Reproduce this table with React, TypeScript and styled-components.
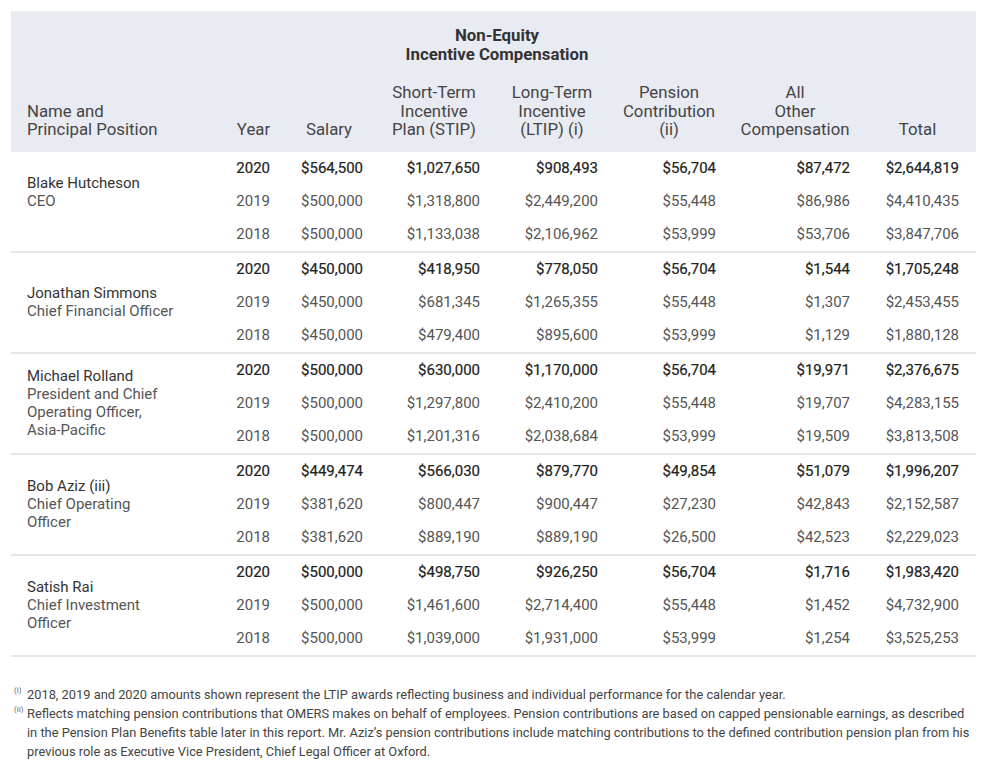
import React from 'react';
import styled, { createGlobalStyle } from 'styled-components';

const GlobalStyle = createGlobalStyle`
    body {
        margin: 0;
        background: #fff;
        font-family: Roboto, "Liberation Sans", sans-serif;
        color: #444;
    }
`;

const COLUMNS = '214px 57px 94px 116px 120px 114px 138px 112px';
const VALUE_PAD = [12, 13, 12, 14, 10, 14, 17];

type Exec = {
    lines: string[];
    rows: { year: string; values: string[] }[];
};

const EXECS: Exec[] = [
    {
        lines: ['Blake Hutcheson', 'CEO', '\u00a0'],
        rows: [
            { year: '2020', values: ['$564,500', '$1,027,650', '$908,493', '$56,704', '$87,472', '$2,644,819'] },
            { year: '2019', values: ['$500,000', '$1,318,800', '$2,449,200', '$55,448', '$86,986', '$4,410,435'] },
            { year: '2018', values: ['$500,000', '$1,133,038', '$2,106,962', '$53,999', '$53,706', '$3,847,706'] }
        ]
    },
    {
        lines: ['Jonathan Simmons', 'Chief Financial Officer'],
        rows: [
            { year: '2020', values: ['$450,000', '$418,950', '$778,050', '$56,704', '$1,544', '$1,705,248'] },
            { year: '2019', values: ['$450,000', '$681,345', '$1,265,355', '$55,448', '$1,307', '$2,453,455'] },
            { year: '2018', values: ['$450,000', '$479,400', '$895,600', '$53,999', '$1,129', '$1,880,128'] }
        ]
    },
    {
        lines: ['Michael Rolland', 'President and Chief', 'Operating Officer,', 'Asia-Pacific'],
        rows: [
            { year: '2020', values: ['$500,000', '$630,000', '$1,170,000', '$56,704', '$19,971', '$2,376,675'] },
            { year: '2019', values: ['$500,000', '$1,297,800', '$2,410,200', '$55,448', '$19,707', '$4,283,155'] },
            { year: '2018', values: ['$500,000', '$1,201,316', '$2,038,684', '$53,999', '$19,509', '$3,813,508'] }
        ]
    },
    {
        lines: ['Bob Aziz (iii)', 'Chief Operating', 'Officer'],
        rows: [
            { year: '2020', values: ['$449,474', '$566,030', '$879,770', '$49,854', '$51,079', '$1,996,207'] },
            { year: '2019', values: ['$381,620', '$800,447', '$900,447', '$27,230', '$42,843', '$2,152,587'] },
            { year: '2018', values: ['$381,620', '$889,190', '$889,190', '$26,500', '$42,523', '$2,229,023'] }
        ]
    },
    {
        lines: ['Satish Rai', 'Chief Investment', 'Officer'],
        rows: [
            { year: '2020', values: ['$500,000', '$498,750', '$926,250', '$56,704', '$1,716', '$1,983,420'] },
            { year: '2019', values: ['$500,000', '$1,461,600', '$2,714,400', '$55,448', '$1,452', '$4,732,900'] },
            { year: '2018', values: ['$500,000', '$1,039,000', '$1,931,000', '$53,999', '$1,254', '$3,525,253'] }
        ]
    }
];

const HEADERS = [
    ['Year'],
    ['Salary'],
    ['Short-Term', 'Incentive', 'Plan (STIP)'],
    ['Long-Term', 'Incentive', '(LTIP) (i)'],
    ['Pension', 'Contribution', '(ii)'],
    ['All', 'Other', 'Compensation'],
    ['Total']
];

const Page = styled.div`
    padding: 11px 12px 20px 11px;
`;

const Table = styled.div`
    width: 965px;
`;

const HeaderGrid = styled.div`
    display: grid;
    grid-template-columns: ${COLUMNS};
    background: #e9ebf3;
    padding: 15px 0 13px;
    font-size: 16.8px;
    line-height: 18.5px;
    color: #444;
`;

const GroupLabel = styled.div`
    grid-column: 4 / 6;
    grid-row: 1;
    text-align: center;
    font-weight: 700;
    color: #333;
    padding-left: 6px;
`;

const ColLabel = styled.div<{ $left?: boolean; $padRight?: number }>`
    grid-row: 2;
    align-self: end;
    margin-top: 20px;
    text-align: ${(p) => (p.$left ? 'left' : 'center')};
    padding-left: ${(p) => (p.$left ? '16px' : '0')};
    padding-right: ${(p) => p.$padRight ?? 0}px;
`;

const Group = styled.div`
    display: grid;
    grid-template-columns: ${COLUMNS};
    grid-template-rows: repeat(3, 33px);
    border-bottom: 2px solid #e6e6e6;
`;

const NameCell = styled.div`
    grid-column: 1;
    grid-row: 1 / span 3;
    align-self: center;
    padding-left: 16px;
    font-size: 15px;
    line-height: 18px;
    color: #444;
`;

const NameLine = styled.div<{ $first?: boolean }>`
    color: ${(p) => (p.$first ? '#333' : '#555')};
`;

const Value = styled.div<{ $bold?: boolean; $pad: number }>`
    display: flex;
    align-items: center;
    justify-content: flex-end;
    padding-right: ${(p) => p.$pad}px;
    font-size: 15px;
    font-weight: 400;
    color: ${(p) => (p.$bold ? '#222' : '#555')};
    -webkit-text-stroke: ${(p) => (p.$bold ? '0.2px #222' : '0')};
`;

const Notes = styled.div`
    margin-top: 28px;
    margin-left: 3px;
    display: grid;
    grid-template-columns: 13px 1fr;
    font-size: 12.85px;
    line-height: 19px;
    color: #444;
    width: 962px;
`;

const Marker = styled.span`
    font-size: 8px;
    line-height: 12px;
    color: #666;
`;

const NoteText = styled.div``;

export default function App() {
    return (
        <>
            <GlobalStyle />
            <Page>
                <Table>
                    <HeaderGrid>
                        <GroupLabel>
                            Non-Equity
                            <br />
                            Incentive Compensation
                        </GroupLabel>
                        <ColLabel $left>
                            Name and
                            <br />
                            Principal Position
                        </ColLabel>
                        {HEADERS.map((h, i) => (
                            <ColLabel key={i} $padRight={i === HEADERS.length - 1 ? 5 : 0}>
                                {h.map((line, j) => (
                                    <div key={j}>{line}</div>
                                ))}
                            </ColLabel>
                        ))}
                    </HeaderGrid>
                    {EXECS.map((exec) => (
                        <Group key={exec.lines[0]}>
                            <NameCell>
                                {exec.lines.map((line, j) => (
                                    <NameLine key={j} $first={j === 0}>
                                        {line}
                                    </NameLine>
                                ))}
                            </NameCell>
                            {exec.rows.map((row, r) =>
                                [row.year, ...row.values].map((v, c) => (
                                    <Value
                                        key={`${r}-${c}`}
                                        $bold={r === 0}
                                        $pad={VALUE_PAD[c]}
                                        style={{ gridRow: r + 1, gridColumn: c + 2 }}
                                    >
                                        {v}
                                    </Value>
                                ))
                            )}
                        </Group>
                    ))}
                </Table>
                <Notes>
                    <Marker>(i)</Marker>
                    <NoteText>
                        2018, 2019 and 2020 amounts shown represent the LTIP awards reflecting business and individual
                        performance for the calendar year.
                    </NoteText>
                    <Marker>(ii)</Marker>
                    <NoteText>
                        Reflects matching pension contributions that OMERS makes on behalf of employees. Pension
                        contributions are based on capped pensionable earnings, as described in the Pension Plan Benefits
                        table later in this report. Mr. Aziz’s pension contributions include matching contributions to the
                        defined contribution pension plan from his previous role as Executive Vice President, Chief Legal
                        Officer at Oxford.
                    </NoteText>
                </Notes>
            </Page>
        </>
    );
}
